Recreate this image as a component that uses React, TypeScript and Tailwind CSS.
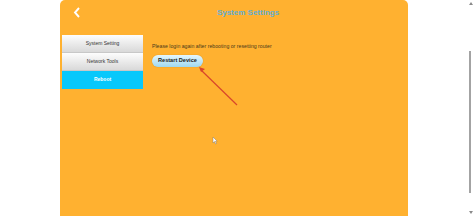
import React from 'react';

const menu = [
  { label: 'System Setting', active: false },
  { label: 'Network Tools', active: false },
  { label: 'Reboot', active: true },
];

const App: React.FC = () => {
  return (
    <div className="relative w-[474px] h-[216px] overflow-hidden bg-white flex" style={{ fontFamily: '"Liberation Sans", Arial, sans-serif' }}>
      <div className="w-[468px] h-full flex justify-center">
        <div className="w-[348px] h-[230px] bg-[#ffb130] rounded-t-[5px] flex flex-col">
          {/* header */}
          <div className="relative h-[25px] flex items-center justify-center pl-[28px]">
            <svg className="absolute left-[13px] top-[7px]" width="8" height="11" viewBox="0 0 8 11">
              <path d="M6 1 L2 5.5 L6 10" fill="none" stroke="#ffffff" strokeWidth="1.9" />
            </svg>
            <span className="text-[8px] font-bold text-[#62aed3] leading-none">System Settings</span>
          </div>

          <div className="flex pt-[10px]">
            {/* side menu */}
            <div className="ml-[2px] w-[81px] flex flex-col">
              {menu.map(m => (
                <div
                  key={m.label}
                  className={
                    m.active
                      ? 'h-[18px] flex items-center justify-center bg-[#08c8fb] text-white text-[5px] font-bold'
                      : 'h-[18px] flex items-center justify-center bg-gradient-to-b from-[#fdfdfd] to-[#d9d9d9] border-b border-[#c8c8c8] text-[#333333] text-[5px]'
                  }
                >
                  {m.label}
                </div>
              ))}
            </div>

            {/* content */}
            <div className="ml-[9px] pt-[9px] flex flex-col items-start">
              <p className="text-[5.2px] text-[#4a3a1a] leading-none">Please login again after rebooting or resetting router</p>
              <button className="mt-[6px] h-[12px] px-[6px] rounded-full bg-gradient-to-b from-[#e4f6fd] to-[#9fd8f0] text-[5.6px] font-bold text-[#1a1a1a] leading-none shadow-[0_0_1px_rgba(0,0,0,0.3)]">
                Restart Device
              </button>
            </div>
          </div>
        </div>
      </div>

      {/* scrollbar */}
      <div className="w-[6px] h-full relative">
        <svg className="absolute left-[1px] top-[2px]" width="4" height="3" viewBox="0 0 4 3">
          <path d="M0 3 L2 0 L4 3 Z" fill="#8a8a8a" />
        </svg>
        <div className="absolute left-[1px] top-[51px] w-[2px] h-[142px] bg-[#a3a3a3]" />
        <svg className="absolute left-[1px] bottom-[2px]" width="4" height="3" viewBox="0 0 4 3">
          <path d="M0 0 L2 3 L4 0 Z" fill="#8a8a8a" />
        </svg>
      </div>

      {/* annotation arrow */}
      <svg className="absolute left-0 top-0 pointer-events-none" width="474" height="216" viewBox="0 0 474 216">
        <line x1="237" y1="105" x2="201" y2="70" stroke="#d9462a" strokeWidth="1.2" />
        <path d="M199 67 L205 69 L201 72 Z" fill="#d9462a" />
        {/* mouse cursor */}
        <path d="M213 137 L213 143 L214.5 141.6 L215.6 144 L216.4 143.6 L215.4 141.3 L217.2 141.2 Z" fill="#ffffff" stroke="#6b6b6b" strokeWidth="0.4" />
      </svg>
    </div>
  );
};

export default App;
